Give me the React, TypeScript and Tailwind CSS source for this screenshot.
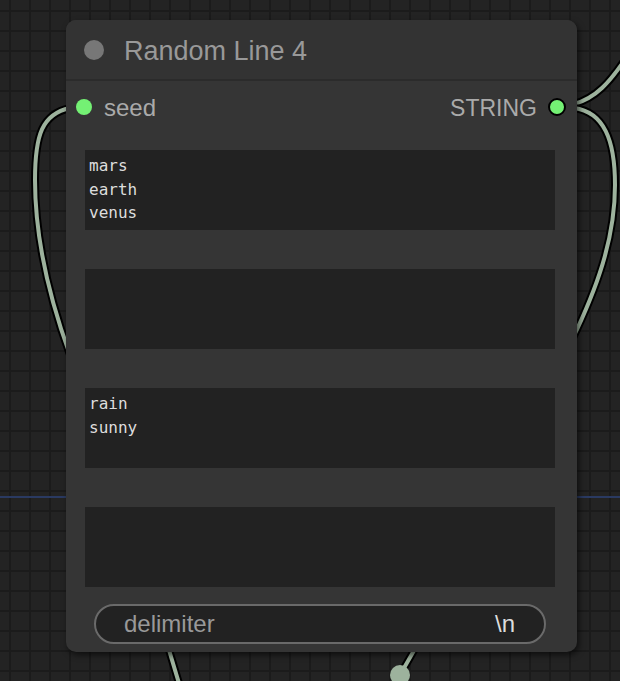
const WIRE = '#9db29d';

function Wire({ d }: { d: string }) {
  return (
    <g fill="none" strokeLinecap="round">
      <path d={d} stroke="#000" strokeWidth={8} />
      <path d={d} stroke={WIRE} strokeWidth={4} />
    </g>
  );
}

function Canvas() {
  return (
    <svg className="absolute inset-0" width={620} height={681}>
      <defs>
        <pattern id="grid" x={9} y={10} width={20} height={20} patternUnits="userSpaceOnUse">
          <rect width={20} height={20} fill="#232323" />
          <rect width={2} height={20} fill="#1b1b1b" />
          <rect width={20} height={2} fill="#1b1b1b" />
        </pattern>
      </defs>
      <rect width={620} height={681} fill="url(#grid)" />
      <rect x={0} y={496} width={620} height={2} fill="#2a3a62" />
      <Wire d="M 70 108 C 42 114, 35 135, 35 180 C 35 240, 50 300, 70 355" />
      <Wire d="M 574 104 C 596 98, 610 82, 626 58" />
      <Wire d="M 574 108 C 604 112, 615 140, 615 185 C 615 240, 596 290, 572 340" />
      <Wire d="M 166 640 L 181 690" />
      <Wire d="M 420 640 L 400 675" />
      <circle cx={400} cy={675} r={10} fill={WIRE} />
    </svg>
  );
}

function TextBox({ lines }: { lines: string[] }) {
  return (
    <div className="h-[80px] w-[470px] bg-[#222] pl-[4px] pt-[4px] font-['DejaVu_Sans_Mono',monospace] text-[16px] leading-[23.5px] text-[#ddd]">
      {lines.map((l) => (
        <div key={l}>{l}</div>
      ))}
    </div>
  );
}

export default function App() {
  return (
    <div className="relative h-[681px] w-[620px] overflow-hidden bg-[#232323] font-['Liberation_Sans',Arial,sans-serif]">
      <Canvas />
      <div className="absolute left-[66px] top-[20px] w-[511px] overflow-hidden rounded-[10px] bg-[#353535] shadow-[2px_3px_6px_rgba(0,0,0,0.6)]">
        <div className="flex h-[61px] items-center border-b-2 border-[#2b2b2b] bg-[#333] pl-[18px]">
          <div className="h-[20px] w-[20px] rounded-full bg-[#777]" />
          <span className="ml-[20px] pt-[3px] text-[27px] text-[#999]">Random Line 4</span>
        </div>

        <div className="flex h-[52px] items-center justify-between pl-[10px] pr-[11px]">
          <div className="flex items-center">
            <div className="h-[16px] w-[16px] rounded-full bg-[#74f174]" />
            <span className="ml-[12px] pt-[2px] text-[24px] leading-none text-[#aaa]">seed</span>
          </div>
          <div className="flex items-center">
            <span className="mr-[11px] pt-[2px] text-[23px] leading-none text-[#aaa]">STRING</span>
            <div className="h-[18px] w-[18px] rounded-full border-2 border-black bg-[#74f174]" />
          </div>
        </div>

        <div className="ml-[19px] mt-[17px] flex flex-col gap-[39px]">
          <TextBox lines={['mars', 'earth', 'venus']} />
          <TextBox lines={[]} />
          <TextBox lines={['rain', 'sunny']} />
          <TextBox lines={[]} />
        </div>

        <div className="mb-[8px] ml-[28px] mt-[17px] flex h-[40px] w-[452px] items-center justify-between rounded-full border-2 border-[#6a6a6a] bg-[#222] pl-[28px] pr-[29px] text-[24px]">
          <span className="text-[#999]">delimiter</span>
          <span className="text-[#ddd]">\n</span>
        </div>
      </div>
    </div>
  );
}
